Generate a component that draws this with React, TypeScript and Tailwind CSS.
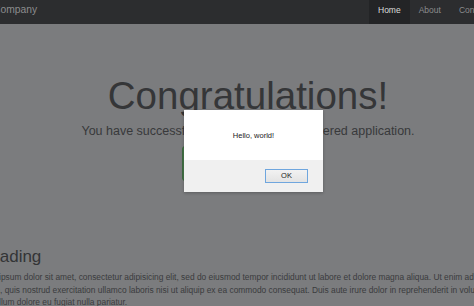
import React from "react";

export default function App() {
  return (
    <div
      className="relative w-[474px] h-[306px] overflow-hidden bg-[#7b7c7e]"
      style={{ fontFamily: '"Liberation Sans", Arial, sans-serif' }}
    >
      {/* navbar */}
      <div className="flex h-[24px] bg-[#2c2d2f] whitespace-nowrap">
        <div className="w-[376px] shrink-0 -ml-[7px] flex items-center pb-[4px] text-[10.3px] text-[#8b8c8e]">
          Company
        </div>
        <div className="flex shrink-0 text-[8.5px]">
          <div className="h-[24px] px-[9px] flex items-center pb-[3px] bg-[#232426] text-[#dcdcdc]">Home</div>
          <div className="h-[24px] px-[9px] flex items-center pb-[3px] text-[#8b8c8e]">About</div>
          <div className="h-[24px] px-[9px] flex items-center pb-[3px] text-[#8b8c8e]">Contact</div>
        </div>
      </div>

      {/* jumbotron */}
      <div className="pl-[22px] pt-[53px] flex flex-col items-center text-center whitespace-nowrap">
        <h1 className="text-[38.5px] leading-none text-[#353638]">Congratulations!</h1>
        <p className="mt-[9px] text-[12.5px] leading-none text-[#38393b]">
          You have successfully created a Kitura-powered application.
        </p>
        <div className="mt-[9px] w-[132px] h-[35px] rounded-[3px] bg-[#47784a] border border-[#3e6b41]" />
      </div>

      {/* content */}
      <div className="-ml-[27px] mt-[67px] whitespace-nowrap">
        <h2 className="ml-[5px] text-[17px] leading-none text-[#333436]">Heading</h2>
        <p className="mt-[6px] text-[8.4px] leading-[12.5px] text-[#3a3b3d]">
          Lorem ipsum dolor sit amet, consectetur adipisicing elit, sed do eiusmod tempor incididunt ut labore et dolore magna aliqua. Ut enim ad minim
          <br />
          veniam, quis nostrud exercitation ullamco laboris nisi ut aliquip ex ea commodo consequat. Duis aute irure dolor in reprehenderit in voluptate velit
          <br />
          esse cillum dolore eu fugiat nulla pariatur.
        </p>
      </div>

      {/* alert dialog */}
      <div className="absolute left-[184px] top-[110px] w-[139px] h-[82px] flex flex-col bg-white shadow-[0_1px_3px_rgba(0,0,0,0.25)]">
        <div className="h-[50px] flex items-center justify-center text-[7.5px] text-[#1a1a1a] pt-[1px]">
          Hello, world!
        </div>
        <div className="flex-1 bg-[#f0f0f0] flex items-center justify-end pr-[15px]">
          <div className="w-[43px] h-[14px] border border-[#6fa6de] bg-gradient-to-b from-[#f2f2f2] to-[#e3e3e3] flex items-center justify-center text-[7.5px] text-[#1a1a1a]">
            OK
          </div>
        </div>
      </div>
    </div>
  );
}
